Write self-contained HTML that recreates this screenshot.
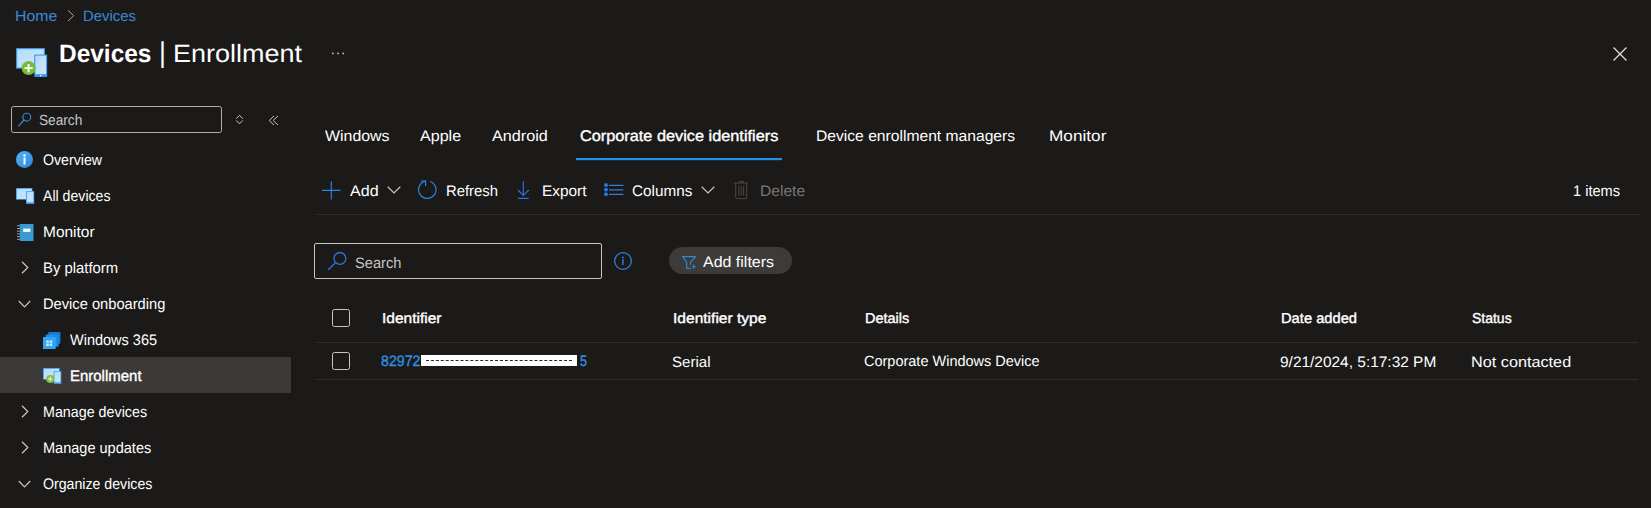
<!DOCTYPE html>
<html lang="en">
<head>
<meta charset="utf-8">
<title>Devices | Enrollment</title>
<style>
html,body{margin:0;padding:0;}
body{width:1651px;height:508px;overflow:hidden;background:#1b1a19;color:#fff;font-family:"Liberation Sans",sans-serif;position:relative;}
.t{text-rendering:geometricPrecision;position:absolute;white-space:nowrap;line-height:20px;font-size:15px;color:#fff;transform-origin:0 50%;}
.b{font-weight:bold;}
.sb{-webkit-text-stroke:0.38px currentColor;}
.blue{color:#2f8fe0;}
.abs{position:absolute;}
svg{position:absolute;overflow:visible;}
.line{position:absolute;height:1px;background:#2f2e2d;}
.cb{position:absolute;width:16px;height:16px;border:1px solid #c8c6c4;border-radius:2.5px;}
</style>
</head>
<body>

<svg width="0" height="0" style="left:0;top:0"><defs>
<linearGradient id="gInfo" x1="0" y1="0" x2="1" y2="1"><stop offset="0" stop-color="#56b4f7"/><stop offset="1" stop-color="#2a86dc"/></linearGradient>
<linearGradient id="gScr" x1="0" y1="0" x2="1" y2="1"><stop offset="0" stop-color="#b5dcfb"/><stop offset="1" stop-color="#cfe6fb"/></linearGradient>
</defs></svg>
<!-- breadcrumb -->
<svg style="left:66.8px;top:10px" width="8" height="12" viewBox="0 0 8 12"><path d="M1 0.4 L6.8 5.7 L1 11" fill="none" stroke="#a8a6a3" stroke-width="1"/></svg>

<!-- title -->
<svg style="left:1613px;top:46.6px" width="14" height="14" viewBox="0 0 14 14"><path d="M0.5 0.5 L13.5 13.5 M13.5 0.5 L0.5 13.5" stroke="#e1dfdd" stroke-width="1.3" fill="none"/></svg>

<svg style="left:331px;top:51px" width="14" height="5" viewBox="0 0 14 5"><circle cx="1.8" cy="2.4" r="0.9" fill="#c8c6c4"/><circle cx="7" cy="2.4" r="0.9" fill="#c8c6c4"/><circle cx="12.2" cy="2.4" r="0.9" fill="#c8c6c4"/></svg>
<!-- title icon -->
<svg id="ticon" style="left:16px;top:47.7px" width="32" height="30" viewBox="0 0 32 30">
  <rect x="0" y="0" width="29" height="20.7" rx="0.8" fill="#3497ea"/>
  <rect x="1.2" y="1.2" width="26.6" height="18.3" fill="url(#gScr)"/>
  <rect x="18.2" y="6.5" width="13" height="22.5" rx="0.8" fill="#3497ea"/>
  <rect x="19.3" y="7.6" width="10.8" height="18.6" fill="url(#gScr)"/>
  <rect x="24" y="27" width="1.4" height="1.2" fill="#fff"/>
  <circle cx="12.6" cy="20.1" r="7" fill="#76bb3a"/>
  <path d="M12.6 16 V24.2 M8.5 20.1 H16.7" stroke="#fff" stroke-width="1.9"/>
</svg>

<!-- sidebar search -->
<div class="abs" id="ssearch" style="left:11px;top:106px;width:209px;height:25px;border:1px solid #b3b0ad;border-radius:2.5px;"></div>
<svg style="left:18px;top:112px" width="14" height="15" viewBox="0 0 14 15"><circle cx="8.8" cy="5.2" r="3.9" fill="none" stroke="#3a8ad8" stroke-width="1.1"/><path d="M6 8 L0.3 14.3" stroke="#3a8ad8" stroke-width="1.2"/></svg>
<svg style="left:235px;top:114px" width="9" height="11" viewBox="0 0 9 11"><path d="M1.2 4.7 L4.5 1.3 L7.8 4.7 M1.2 6.4 L4.5 9.8 L7.8 6.4" fill="none" stroke="#c8c6c4" stroke-width="1"/></svg>
<svg style="left:268px;top:115px" width="11" height="11" viewBox="0 0 11 11"><path d="M6 0.9 L1.2 5.5 L6 10.1 M10 0.9 L5.2 5.5 L10 10.1" fill="none" stroke="#c8c6c4" stroke-width="1"/></svg>

<!-- sidebar selected bg -->
<div class="abs" style="left:0;top:357px;width:291px;height:36px;background:#3b3a39;"></div>

<!-- sidebar icons -->
<svg style="left:15.8px;top:151.2px" width="17" height="17" viewBox="0 0 17 17"><circle cx="8.5" cy="8.5" r="8.5" fill="url(#gInfo)"/><circle cx="8.5" cy="4.6" r="1.25" fill="#fff"/><rect x="7.5" y="6.6" width="2" height="7" fill="#fff"/></svg>
<svg style="left:16px;top:188px" width="19" height="16" viewBox="0 0 19 16"><rect x="0" y="0" width="16.4" height="11.8" rx="0.5" fill="#3a9aeb"/><rect x="0.8" y="0.8" width="14.8" height="10.2" fill="url(#gScr)"/><rect x="10" y="2.9" width="8.2" height="13" rx="0.5" fill="#3a9aeb"/><rect x="10.8" y="3.7" width="6.6" height="10.6" fill="url(#gScr)"/></svg>
<svg style="left:16.5px;top:223.8px" width="17" height="17" viewBox="0 0 17 17"><path d="M0 1.8H3.5 M0 4.5H3.5 M0 7.2H3.5 M0 9.9H3.5 M0 12.6H3.5 M0 15.3H3.5" stroke="#a19f9d" stroke-width="1"/><rect x="2.9" y="0" width="13.6" height="17.1" rx="0.6" fill="#3a9bd2"/><rect x="6.2" y="4.6" width="7.1" height="3.3" fill="#fff"/></svg>
<svg style="left:21px;top:261px" width="8" height="13" viewBox="0 0 8 13"><path d="M1 0.8 L6.8 6.5 L1 12.2" fill="none" stroke="#c8c6c4" stroke-width="1.2"/></svg>
<svg style="left:18px;top:300px" width="13" height="8" viewBox="0 0 13 8"><path d="M0.8 1 L6.5 6.8 L12.2 1" fill="none" stroke="#c8c6c4" stroke-width="1.2"/></svg>
<svg style="left:42.8px;top:331.7px" width="18" height="18" viewBox="0 0 18 18"><rect x="5.3" y="0" width="12.1" height="11.8" rx="0.6" fill="#1878d2"/><rect x="2.7" y="2.6" width="12.9" height="12.1" rx="0.6" fill="#1e8ee6"/><rect x="0" y="5" width="12.7" height="12.1" rx="0.6" fill="#2ea6f5"/><path d="M3.2 8.5h2.6v2.3H3.2z M6.6 8.5h2.6v2.3H6.6z M3.2 11.6h2.6v2.3H3.2z M6.6 11.6h2.6v2.3H6.6z" fill="#c9ebfc"/></svg>
<svg style="left:42.8px;top:368px" width="19" height="16" viewBox="0 0 19 16"><rect x="0" y="0" width="16.8" height="11.8" rx="0.5" fill="#3a9aeb"/><rect x="0.8" y="0.8" width="15.2" height="10.2" fill="url(#gScr)"/><rect x="10.6" y="2.9" width="7.7" height="13" rx="0.5" fill="#3a9aeb"/><rect x="11.4" y="3.7" width="6.1" height="10.6" fill="url(#gScr)"/><circle cx="7.3" cy="11" r="4.1" fill="#84c441"/><path d="M7.3 8.8 V13.2 M5.1 11 H9.5" stroke="#e6f5d6" stroke-width="1.1"/></svg>
<svg style="left:21px;top:405px" width="8" height="13" viewBox="0 0 8 13"><path d="M1 0.8 L6.8 6.5 L1 12.2" fill="none" stroke="#c8c6c4" stroke-width="1.2"/></svg>
<svg style="left:21px;top:441px" width="8" height="13" viewBox="0 0 8 13"><path d="M1 0.8 L6.8 6.5 L1 12.2" fill="none" stroke="#c8c6c4" stroke-width="1.2"/></svg>
<svg style="left:18px;top:480px" width="13" height="8" viewBox="0 0 13 8"><path d="M0.8 1 L6.5 6.8 L12.2 1" fill="none" stroke="#c8c6c4" stroke-width="1.2"/></svg>

<!-- sidebar labels -->

<!-- tabs -->
<div class="abs" style="left:576px;top:158px;width:206px;height:2px;background:#2391e6;box-shadow:0 0.5px 0 rgba(35,145,230,0.35);"></div>

<!-- toolbar -->
<svg style="left:322px;top:180.5px" width="19" height="19" viewBox="0 0 19 19"><path d="M9.3 0.2 V18.6 M0.1 9.4 H18.5" stroke="#2d84de" stroke-width="1.15" fill="none"/></svg>
<svg style="left:387px;top:186px" width="14" height="8" viewBox="0 0 14 8"><path d="M0.7 0.8 L7 7 L13.3 0.8" fill="none" stroke="#c8c6c4" stroke-width="1.2"/></svg>
<svg style="left:418px;top:180px" width="19" height="20" viewBox="0 0 19 20"><path d="M11.99 1.48 A8.7 8.7 0 1 1 7.79 1.18" fill="none" stroke="#2d84de" stroke-width="1.2"/><path d="M2.9 1 H7.6 V6" fill="none" stroke="#2d84de" stroke-width="1.2"/></svg>
<svg style="left:517px;top:180px" width="13" height="19" viewBox="0 0 13 19"><path d="M6.3 1.2 V15 M0.9 10 L6.3 15.4 L11.8 10 M0.9 18.4 H11.8" fill="none" stroke="#2873de" stroke-width="1.15"/></svg>
<svg style="left:604px;top:182.5px" width="20" height="14" viewBox="0 0 20 14"><path d="M0.7 0.8h2.6v2.6H0.7z M0.7 5.4h2.6v2.6H0.7z M0.7 10h2.6v2.6H0.7z" fill="#3d8ce6" stroke="#2468d0" stroke-width="1"/><path d="M5 2.3H19.4 M5 6.8H19.4 M5 11.3H19.4" stroke="#2d7fdc" stroke-width="1.3"/></svg>
<svg style="left:701px;top:186px" width="14" height="8" viewBox="0 0 14 8"><path d="M0.7 0.8 L7 7 L13.3 0.8" fill="none" stroke="#c8c6c4" stroke-width="1.2"/></svg>
<svg style="left:734px;top:181px" width="14" height="18" viewBox="0 0 14 18"><path d="M0.1 2.1 H14 M5.2 2.1 V0.5 H9.6 V2.1 M1.7 2.1 V16.6 Q1.7 17.6 2.7 17.6 H11.7 Q12.7 17.6 12.7 16.6 V2.1 M4.9 4.7 V14.7 M7.2 4.7 V14.7 M9.6 4.7 V14.7" fill="none" stroke="#4a4846" stroke-width="1"/></svg>
<div class="line" style="left:316px;top:214px;width:1324px;"></div>

<!-- search -->
<div class="abs" id="msearch" style="left:314px;top:243px;width:286px;height:34px;border:1px solid #c8c6c4;border-radius:2px;"></div>
<svg style="left:328px;top:252px" width="19" height="19" viewBox="0 0 19 19"><circle cx="11.9" cy="6.4" r="5.9" fill="none" stroke="#2b74da" stroke-width="1.3"/><path d="M7.7 10.6 L0.3 17.8" stroke="#2b74da" stroke-width="1.4"/></svg>
<svg style="left:614.3px;top:251.5px" width="18" height="18" viewBox="0 0 18 18"><circle cx="9" cy="9" r="8.3" fill="none" stroke="#2c82e4" stroke-width="1.3"/><circle cx="8.9" cy="5.4" r="0.95" fill="#2c82e4"/><rect x="8.2" y="7.2" width="1.4" height="5.8" fill="#2c82e4"/></svg>
<div class="abs" id="pill" style="left:669px;top:247px;width:123px;height:27px;border-radius:14px;background:#3c3b39;"></div>
<svg style="left:682px;top:256px" width="14" height="14" viewBox="0 0 14 14"><path d="M8.5 9 V6.2 L13.5 0.6 H0.5 L4.7 6.2 V12.4 H8.5" fill="none" stroke="#2a8ad8" stroke-width="1.15" stroke-linejoin="round"/><path d="M11.7 8.6 V12.8 M9.6 10.7 H13.8" stroke="#2a8ad8" stroke-width="1.1"/></svg>

<!-- table -->
<div class="cb" style="left:332px;top:309px;"></div>
<div class="line" style="left:316px;top:342px;width:1322px;"></div>
<div class="cb" style="left:332px;top:352px;"></div>
<div class="abs" style="left:421px;top:355px;width:156.3px;height:11px;background:#fff;"></div>
<div class="abs" style="left:426px;top:360px;width:146px;height:0;border-top:1px dashed #1d2b3f;"></div>
<div class="line" style="left:316px;top:378.5px;width:1322px;"></div>

<div class="t" id="bc1" style="left:15.36px;top:7.01px;font-size:15.0px;color:#3a88d8;transform:scaleX(1.0565);">Home</div>
<div class="t" id="bc2" style="left:83.12px;top:7.01px;font-size:15.0px;color:#3a88d8;transform:scaleX(0.9930);">Devices</div>
<div class="t b" id="ti1" style="left:59.43px;top:38.01px;font-size:25.0px;line-height:32px;transform:scaleX(0.9783);">Devices</div>
<div class="t" id="ti2" style="left:158.63px;top:37.01px;font-size:28.6px;line-height:32px;transform:scaleX(0.9347);">|</div>
<div class="t" id="ti3" style="left:173.38px;top:38.01px;font-size:25.0px;line-height:32px;transform:scaleX(1.0788);">Enrollment</div>
<div class="t" id="sstext" style="left:38.85px;top:111.00px;font-size:14.7px;color:#c8c6c4;transform:scaleX(0.9303);">Search</div>
<div class="t" id="m1" style="left:43.13px;top:151.01px;font-size:15.3px;transform:scaleX(0.9258);">Overview</div>
<div class="t" id="m2" style="left:42.69px;top:187.01px;font-size:15.3px;transform:scaleX(0.9230);">All devices</div>
<div class="t" id="m3" style="left:43.30px;top:223.01px;font-size:15.3px;transform:scaleX(1.0119);">Monitor</div>
<div class="t" id="m4" style="left:42.88px;top:259.01px;font-size:15.3px;transform:scaleX(0.9708);">By platform</div>
<div class="t" id="m5" style="left:43.33px;top:295.01px;font-size:15.3px;transform:scaleX(0.9593);">Device onboarding</div>
<div class="t" id="m6" style="left:70.09px;top:331.01px;font-size:15.3px;transform:scaleX(0.9475);">Windows 365</div>
<div class="t sb" id="m7" style="left:69.72px;top:367.01px;font-size:15.3px;transform:scaleX(0.9787);">Enrollment</div>
<div class="t" id="m8" style="left:43.35px;top:403.01px;font-size:15.3px;transform:scaleX(0.9340);">Manage devices</div>
<div class="t" id="m9" style="left:43.34px;top:439.01px;font-size:15.3px;transform:scaleX(0.9498);">Manage updates</div>
<div class="t" id="m10" style="left:43.09px;top:475.01px;font-size:15.3px;transform:scaleX(0.9253);">Organize devices</div>
<div class="t" id="tab1" style="left:325.22px;top:127.01px;font-size:15.3px;transform:scaleX(1.0399);">Windows</div>
<div class="t" id="tab2" style="left:420.24px;top:127.01px;font-size:15.3px;transform:scaleX(1.0494);">Apple</div>
<div class="t" id="tab3" style="left:492.03px;top:127.01px;font-size:15.3px;transform:scaleX(1.0578);">Android</div>
<div class="t sb" id="tab4" style="left:580.40px;top:127.01px;font-size:15.3px;transform:scaleX(1.0648);">Corporate device identifiers</div>
<div class="t" id="tab5" style="left:815.89px;top:127.01px;font-size:15.3px;transform:scaleX(1.0224);">Device enrollment managers</div>
<div class="t" id="tab6" style="left:1049.15px;top:127.01px;font-size:15.3px;transform:scaleX(1.1245);">Monitor</div>
<div class="t" id="tb1" style="left:350.48px;top:182.01px;font-size:15.3px;transform:scaleX(1.0489);">Add</div>
<div class="t" id="tb2" style="left:446.01px;top:182.01px;font-size:15.3px;transform:scaleX(0.9692);">Refresh</div>
<div class="t" id="tb3" style="left:542.37px;top:182.01px;font-size:15.3px;transform:scaleX(1.0056);">Export</div>
<div class="t" id="tb4" style="left:631.98px;top:182.01px;font-size:15.3px;transform:scaleX(0.9993);">Columns</div>
<div class="t" id="tb5" style="left:760.35px;top:182.01px;font-size:15.3px;color:#787674;transform:scaleX(1.0193);">Delete</div>
<div class="t" id="tb6" style="left:1572.67px;top:182.01px;font-size:15.3px;transform:scaleX(0.9528);">1 items</div>
<div class="t" id="mstext" style="left:355.06px;top:254.01px;font-size:15.2px;color:#c8c6c4;transform:scaleX(0.9626);">Search</div>
<div class="t" id="pilltext" style="left:702.52px;top:253.01px;font-size:15.3px;transform:scaleX(1.0440);">Add filters</div>
<div class="t sb" id="h1" style="left:382.21px;top:309.01px;font-size:14.4px;transform:scaleX(1.0781);">Identifier</div>
<div class="t sb" id="h2" style="left:673.43px;top:309.01px;font-size:14.4px;transform:scaleX(1.0810);">Identifier type</div>
<div class="t sb" id="h3" style="left:864.84px;top:309.01px;font-size:14.4px;transform:scaleX(1.0061);">Details</div>
<div class="t sb" id="h4" style="left:1281.13px;top:309.01px;font-size:14.4px;transform:scaleX(1.0219);">Date added</div>
<div class="t sb" id="h5" style="left:1472.40px;top:309.01px;font-size:14.4px;transform:scaleX(0.9712);">Status</div>
<div class="t sb" id="r1" style="left:381.45px;top:352.01px;font-size:15.2px;color:#2f8fe0;transform:scaleX(0.9324);">82972</div>
<div class="t sb" id="r1b" style="left:579.50px;top:352.01px;font-size:15.2px;color:#2f8fe0;transform:scaleX(0.8257);">5</div>
<div class="t" id="r2" style="left:672.26px;top:353.00px;font-size:15.1px;transform:scaleX(0.9969);">Serial</div>
<div class="t" id="r3" style="left:863.91px;top:352.01px;font-size:14.8px;transform:scaleX(0.9797);">Corporate Windows Device</div>
<div class="t" id="r4" style="left:1280.04px;top:353.00px;font-size:15.1px;transform:scaleX(1.0233);">9/21/2024, 5:17:32 PM</div>
<div class="t" id="r5" style="left:1470.64px;top:353.00px;font-size:15.1px;transform:scaleX(1.0755);">Not contacted</div>
</body>
</html>
